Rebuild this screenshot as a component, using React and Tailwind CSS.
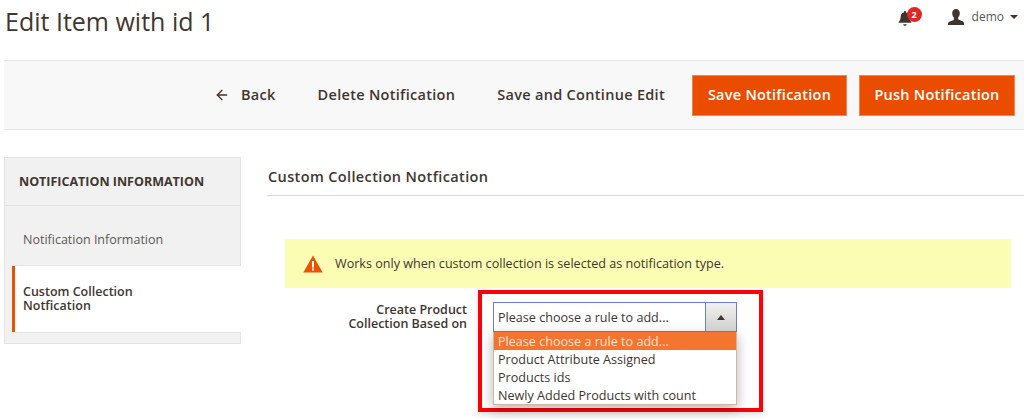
import React from 'react';
import { ArrowLeft } from 'lucide-react';

function BellIcon() {
  return (
    <svg width="16" height="16" viewBox="0 0 16 16" className="fill-[#41362f]">
      <path d="M8 1c.6 0 1 .4 1 1v.5c2.200.5 3.400 2.200 3.400 4.500 0 2.400.6 3.600 2 5v.8H1.600V12c1.400-1.400 2-2.600 2-5 0-2.300 1.200-4 3.400-4.500V2c0-.6.4-1 1-1z" />
      <path d="M6.300 14.200h3.400c0 1-.8 1.600-1.700 1.600s-1.700-.6-1.700-1.600z" />
    </svg>
  );
}

function UserIcon() {
  return (
    <svg width="18" height="16" viewBox="0 0 18 16" className="fill-[#41362f]">
      <path d="M9 0c2.400 0 3.800 1.700 3.800 4.200 0 1.900-.8 3.500-1.700 4.400v1.200c0 .7 1 1.100 2.600 1.700 1.900.7 3.300 1.300 3.300 2.500V16H1v-1.500c0-1.200 1.400-1.800 3.300-2.500 1.600-.6 2.600-1 2.600-1.700V8.600C6 7.700 5.200 6.100 5.200 4.200 5.200 1.700 6.600 0 9 0z" />
    </svg>
  );
}

function WarningIcon() {
  return (
    <svg width="20" height="18" viewBox="0 0 20 18">
      <path d="M10 .5 19.700 17.500H.3z" fill="#eb5202" />
      <rect x="9" y="6" width="2" height="6.500" fill="#fff" />
      <rect x="9" y="13.500" width="2" height="2" fill="#fff" />
    </svg>
  );
}

function ToolbarLink({ children, className = '' }) {
  return <span className={`text-[14.5px] font-semibold text-[#41362f] tracking-[0.3px] ${className}`}>{children}</span>;
}

function PrimaryButton({ children, className = '' }) {
  return (
    <button className={`h-[41px] bg-[#eb4d00] border border-[#f5835a] text-white text-[14.5px] font-semibold tracking-[0.25px] ${className}`}>
      {children}
    </button>
  );
}

export default function App() {
  return (
    <div className="relative w-[1024px] h-[419px] overflow-hidden bg-white font-['Open_Sans',sans-serif] text-[#41362f]">
      {/* header */}
      <div className="h-[60px] flex justify-between pl-[5px] pr-[6px]">
        <h1 className="text-[25px] leading-[36px] mt-[3px] font-normal text-[#41362f]">Edit Item with id 1</h1>
        <div className="flex items-start pt-[9px]">
          <div className="relative mr-[34px] mt-[1px]">
            <BellIcon />
            <span className="absolute -top-[3px] left-[10px] w-[15px] h-[15px] rounded-full bg-[#e22626] text-white text-[9px] font-bold leading-[15px] text-center">2</span>
          </div>
          <UserIcon />
          <span className="text-[12px] leading-[16px] text-[#5c5852] ml-[7px]">demo</span>
          <span className="ml-[6px] mt-[6px] w-0 h-0 border-x-[4px] border-x-transparent border-t-[4px] border-t-[#41362f]" />
        </div>
      </div>

      {/* toolbar */}
      <div className="ml-[4px] h-[70px] bg-[#f8f8f8] border-y border-[#e3e3e3] flex items-center justify-end pr-[9px]">
        <ArrowLeft size={16} strokeWidth={2} className="text-[#41362f] mr-[11px]" />
        <ToolbarLink className="mr-[42px]">Back</ToolbarLink>
        <ToolbarLink className="mr-[42px]">Delete Notification</ToolbarLink>
        <ToolbarLink className="mr-[27px]">Save and Continue Edit</ToolbarLink>
        <div className="flex gap-[12px]">
          <PrimaryButton className="w-[155px]">Save Notification</PrimaryButton>
          <PrimaryButton className="w-[156px]">Push Notification</PrimaryButton>
        </div>
      </div>

      <div className="flex pt-[27px]">
        {/* sidebar */}
        <div className="ml-[4px] w-[237px] h-[187px] bg-[#f1f1f1] border border-[#e3e3e3] flex flex-col">
          <div className="h-[48px] border-b border-[#e3e3e3] flex items-center pl-[14px] pt-[2px] text-[12.5px] font-bold text-[#41362f]">
            NOTIFICATION INFORMATION
          </div>
          <div className="h-[60px] flex items-center pl-[18px] pt-[8px] text-[12.5px] text-[#5c5852]">Notification Information</div>
          <div className="h-[66px] ml-[7px] -mr-px bg-white border-l-[3px] border-[#eb5202] pl-[8px] pt-[19px] text-[12.5px] leading-[14px] font-semibold text-[#41362f] shadow-[0_1px_0_#e3e3e3,0_-1px_0_#e3e3e3]">
            Custom Collection
            <br />
            Notfication
          </div>
        </div>

        {/* main */}
        <div className="ml-[26px] flex-1">
          <div className="h-[38px] pl-[1px] border-b border-[#d8d6d3] text-[14.5px] font-semibold tracking-[0.37px] leading-[38px] mt-[1px]">
            Custom Collection Notfication
          </div>
          <div className="mt-[43px] ml-[18px] mr-[13px] h-[49px] bg-[#fbfdb4] flex items-center pl-[18px] pt-[1px] text-[12.6px] text-[#41362f]">
            <WarningIcon />
            <span className="ml-[12px]">Works only when custom collection is selected as notification type.</span>
          </div>
          <div className="flex mt-[15px]">
            <label className="w-[200px] text-right text-[12.5px] leading-[14px] font-semibold">
              Create Product
              <br />
              Collection Based on
            </label>
          </div>
        </div>
      </div>

      {/* open select, highlighted */}
      <div className="absolute left-[478px] top-[290px] w-[285px] h-[122px] border-[4px] border-[#fb0006] shadow-[0_3px_6px_rgba(0,0,0,0.12)]">
        <div className="absolute left-[11px] top-[8px] w-[244px] text-[12.6px]">
          <div className="h-[30px] flex border border-[#6f7bd8] bg-white">
            <span className="flex-1 pl-[4px] leading-[30px] text-[#41362f]">Please choose a rule to add...</span>
            <span className="w-[31px] border-l border-[#6f7bd8] bg-gradient-to-b from-[#f2f2f0] to-[#cfcfcd] flex items-center justify-center">
              <span className="w-0 h-0 border-x-[4px] border-x-transparent border-b-[5px] border-b-[#41362f]" />
            </span>
          </div>
          <div className="border-x border-b border-[#d9b49d] bg-white leading-[20px] text-[#41362f] shadow-[0_4px_12px_rgba(0,0,0,0.3)]">
            <div className="h-[18px] bg-[#f4752f] text-[#fde3d3] pl-[4px]">Please choose a rule to add...</div>
            <div className="h-[18px] pl-[4px]">Product Attribute Assigned</div>
            <div className="h-[18px] pl-[4px]">Products ids</div>
            <div className="h-[18px] pl-[4px]">Newly Added Products with count</div>
          </div>
        </div>
      </div>
    </div>
  );
}
